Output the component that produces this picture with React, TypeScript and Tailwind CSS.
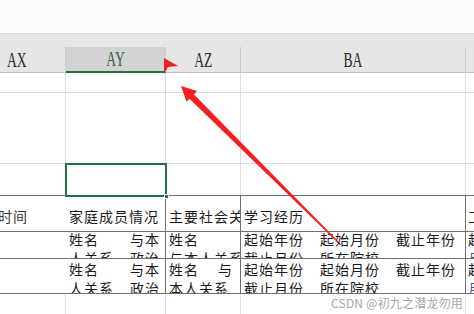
import React from "react";

const cjk = "font-['Noto_Sans_CJK_SC',sans-serif] text-[14px] leading-[19px] tracking-[1px] text-[#1a1a1a] whitespace-nowrap";
const light = "border-[#dedede]";
const dark = "border-[#707070]";

function Cell({ w, className = "", children }: { w: string; className?: string; children?: React.ReactNode }) {
  return <div className={`${w} shrink-0 h-full overflow-hidden border-r ${className}`}>{children}</div>;
}

function Head({ w, label, active }: { w: string; label: string; active?: boolean }) {
  return (
    <div
      className={`${w} shrink-0 h-full flex items-center justify-center border-r border-[#cbcbcb] ${
        active ? "bg-[#d3d3d3] border-b-2 border-b-[#217346]" : "border-b border-b-[#c4c4c4]"
      }`}
    >
      <span
        className={`inline-block scale-x-[0.68] font-['Liberation_Serif',serif] text-[20px] leading-none ${
          active ? "text-[#2a6a45]" : "text-[#2a2a2a]"
        }`}
      >
        {label}
      </span>
    </div>
  );
}

function GridRow({ top }: { top?: boolean }) {
  return (
    <>
      <Cell w="w-[66px]" className={light} />
      <Cell w="w-[100px]" className={light} />
      <Cell w="w-[75px]" className={light} />
      <Cell w="w-[225px]" className={light} />
      <div className={top ? "w-[8px]" : "w-[8px]"} />
    </>
  );
}

export default function App() {
  return (
    <div className="relative w-[474px] h-[314px] overflow-hidden bg-white">
      <div className="h-[34px] bg-[#fbfbfb] border-b border-[#dadada]" />
      <div className="h-[39px] bg-[#e6e6e6] flex flex-col justify-end">
        <div className="h-[26px] flex">
          <div className="w-[66px] shrink-0 h-full flex items-center justify-start border-r border-[#cbcbcb] border-b border-b-[#c4c4c4]">
            <span className="inline-block scale-x-[0.68] origin-left ml-[7px] font-['Liberation_Serif',serif] text-[20px] leading-none text-[#2a2a2a]">AX</span>
          </div>
          <Head w="w-[100px]" label="AY" active />
          <Head w="w-[75px]" label="AZ" />
          <Head w="w-[225px]" label="BA" />
          <div className="w-[8px] shrink-0 h-full border-b border-b-[#c4c4c4]" />
        </div>
      </div>

      {/* row 1 */}
      <div className={`h-[20px] flex border-b ${light}`}>
        <GridRow />
      </div>
      {/* row 2 */}
      <div className={`h-[71px] flex border-b ${light}`}>
        <GridRow />
      </div>
      {/* row 3 */}
      <div className={`h-[32px] flex border-b ${dark}`}>
        <GridRow />
      </div>
      {/* row 4 headers */}
      <div className={`h-[36px] flex border-b ${dark}`}>
        <Cell w="w-[66px]" className="border-r-transparent">
          <div className={`${cjk} pt-[11px] -ml-[2px] text-[#333]`}>时间</div>
        </Cell>
        <Cell w="w-[100px]" className={dark}>
          <div className={`${cjk} pt-[11px] pl-[3px]`}>家庭成员情况</div>
        </Cell>
        <Cell w="w-[75px]" className={dark}>
          <div className={`${cjk} pt-[11px] pl-[3px]`}>主要社会关系</div>
        </Cell>
        <Cell w="w-[225px]" className={dark}>
          <div className={`${cjk} pt-[11px] pl-[3px]`}>学习经历</div>
        </Cell>
        <div className="w-[8px] h-full overflow-hidden">
          <div className={`${cjk} pt-[11px] pl-[2px]`}>工作经历</div>
        </div>
      </div>
      {/* row 5 */}
      <div className={`h-[27px] flex border-b ${dark}`}>
        <Cell w="w-[66px]" className="border-r-transparent" />
        <Cell w="w-[100px]" className={dark}>
          <div className={`${cjk} -mt-[2px] pl-[3px] grid grid-cols-[61px_auto]`}>
            <span>姓名</span><span>与本</span>
            <span>人关系</span><span>政治</span>
          </div>
        </Cell>
        <Cell w="w-[75px]" className={dark}>
          <div className={`${cjk} -mt-[2px] pl-[3px]`}>
            <div>姓名</div>
            <div>与本人关系</div>
          </div>
        </Cell>
        <Cell w="w-[225px]" className={dark}>
          <div className={`${cjk} -mt-[2px] pl-[3px] grid grid-cols-[76px_76px_auto]`}>
            <span>起始年份</span><span>起始月份</span><span>截止年份</span>
            <span>截止月份</span><span>所在院校</span><span />
          </div>
        </Cell>
        <div className="w-[8px] h-full overflow-hidden">
          <div className={`${cjk} -mt-[2px] pl-[2px]`}>
            <div>起始年份</div>
            <div className="text-[#3b5c8c]">月份</div>
          </div>
        </div>
      </div>
      {/* row 6 */}
      <div className={`h-[35px] flex border-b ${dark}`}>
        <Cell w="w-[66px]" className="border-r-transparent" />
        <Cell w="w-[100px]" className={dark}>
          <div className={`${cjk} pt-[1px] pl-[3px] grid grid-cols-[61px_auto]`}>
            <span>姓名</span><span>与本</span>
            <span>人关系</span><span>政治</span>
          </div>
        </Cell>
        <Cell w="w-[75px]" className={dark}>
          <div className={`${cjk} pt-[1px] pl-[3px] grid grid-cols-[49px_auto]`}>
            <span>姓名</span><span>与</span>
            <span className="col-span-2">本人关系</span>
          </div>
        </Cell>
        <Cell w="w-[225px]" className={dark}>
          <div className={`${cjk} pt-[1px] pl-[3px] grid grid-cols-[76px_76px_auto]`}>
            <span>起始年份</span><span>起始月份</span><span>截止年份</span>
            <span>截止月份</span><span>所在院校</span><span />
          </div>
        </Cell>
        <div className="w-[8px] h-full overflow-hidden">
          <div className={`${cjk} pt-[1px] pl-[2px]`}>
            <div>起始年份</div>
            <div className="text-[#3b5c8c]">月份</div>
          </div>
        </div>
      </div>
      {/* row 7 */}
      <div className="h-[40px] flex">
        <GridRow />
      </div>

      {/* selected cell */}
      <div className="absolute left-[65px] top-[163px] w-[102px] h-[34px] border-2 border-[#217346]" />
      <div className="absolute left-[164px] top-[194px] w-[5px] h-[5px] bg-[#217346] border border-white" />

      {/* watermark */}
      <div className="absolute left-[331px] top-[295px] font-['Noto_Sans_CJK_SC',sans-serif] text-[12px] leading-[16px] tracking-[0.2px] text-[#a6a6a6] whitespace-nowrap">
        CSDN @初九之潜龙勿用
      </div>

      {/* annotations */}
      <svg className="absolute left-0 top-0 pointer-events-none" width="474" height="314" viewBox="0 0 474 314">
        <polygon points="164,58 178,66 168,67 164,74" fill="#f41f1f" />
        <polygon
          points="181,86 197,91 194,94.5 338,241 337,242 189.5,98.7 186.5,101.5"
          fill="#f41f1f"
        />
      </svg>
    </div>
  );
}
